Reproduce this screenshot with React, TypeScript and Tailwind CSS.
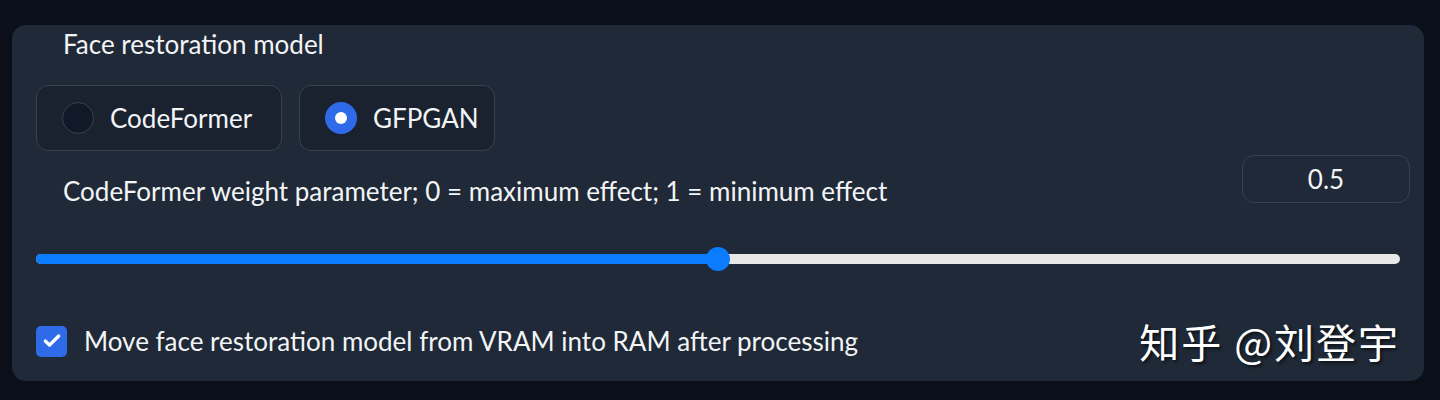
import { Check } from 'lucide-react';

const font = { fontFamily: 'Lato, "Noto Sans", sans-serif' };

const Radio = ({ label, checked, width }: { label: string; checked?: boolean; width: string }) => (
  <label className={`flex items-center h-[66px] pl-[25px] gap-[16px] rounded-[12px] border border-[#374151] bg-[#1a2230] cursor-pointer ${width}`}>
    {checked ? (
      <span className="w-[32px] h-[32px] rounded-full bg-[#2f6ae8] flex items-center justify-center">
        <span className="w-[12px] h-[12px] rounded-full bg-white" />
      </span>
    ) : (
      <span className="w-[32px] h-[32px] rounded-full border border-[#374151] bg-[#111827]" />
    )}
    <span className="text-[26px] text-[#f3f4f6] whitespace-nowrap">{label}</span>
  </label>
);

export default function App() {
  return (
    <div className="w-[1440px] h-[400px] bg-[#0b0f19] pt-[25px] px-[12px]" style={font}>
      <div className="relative w-[1412px] h-[356px] rounded-[14px] bg-[#1f2937] px-[24px] pt-[28px]">
        <div className="pl-[27px] text-[26px] leading-[36px] text-[#f3f4f6] -mt-[27px]">Face restoration model</div>
        <div className="flex gap-[17px] mt-[23px]">
          <Radio label="CodeFormer" width="w-[246px]" />
          <Radio label="GFPGAN" width="w-[196px]" checked />
        </div>

        <div className="flex items-start justify-between mt-[3px]">
          <div className="pl-[27px] pt-[19px] text-[26px] leading-[36px] text-[#f3f4f6]">
            CodeFormer weight parameter; 0 = maximum effect; 1 = minimum effect
          </div>
          <div className="w-[168px] h-[48px] mt-[1px] mr-[-10px] rounded-[12px] border border-[#374151] flex items-center justify-center text-[26px] text-[#f3f4f6]">
            0.5
          </div>
        </div>

        <div className="relative mt-[38px] h-[24px] w-[1364px] flex items-center">
          <div className="h-[10px] w-full rounded-full bg-[#e8e8e8] overflow-hidden flex">
            <div className="h-full w-[682px] bg-[#0b7bff]" />
          </div>
          <div className="absolute left-[670px] top-0 w-[24px] h-[24px] rounded-full bg-[#0b7bff]" />
        </div>

        <div className="flex items-center justify-between mt-[40px]">
          <div className="flex items-center gap-[17px]">
            <span className="w-[31px] h-[31px] rounded-[5px] bg-[#2f6ae8] flex items-center justify-center">
              <Check className="w-[20px] h-[20px] text-white" strokeWidth={4} />
            </span>
            <span className="text-[26px] text-[#f3f4f6]">
              Move face restoration model from VRAM into RAM after processing
            </span>
          </div>
          <div
            className="text-[40px] text-white font-normal tracking-[2px]"
            style={{ fontFamily: '"Noto Sans CJK SC", "Noto Sans", sans-serif', textShadow: '2px 2px 3px rgba(0,0,0,0.6)' }}
          >
            知乎 @刘登宇
          </div>
        </div>
      </div>
    </div>
  );
}
